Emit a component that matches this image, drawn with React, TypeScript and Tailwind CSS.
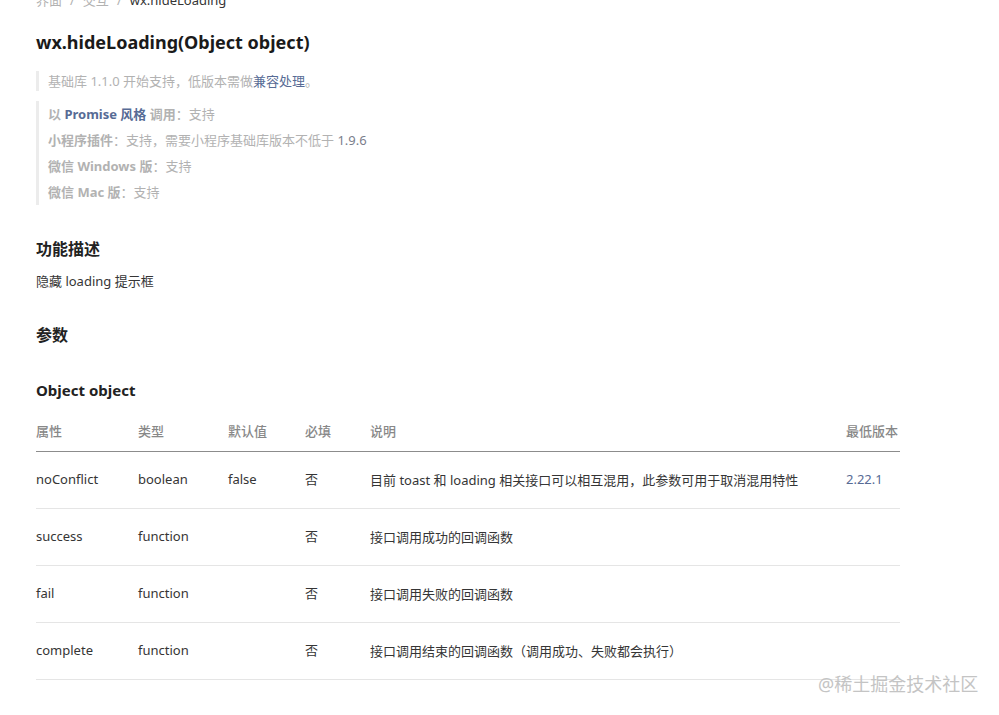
import React from 'react';

// Docs page: wx.hideLoading API reference

const font = "font-['Noto_Sans','Noto_Sans_CJK_SC',sans-serif]";

type Row = {
  name: string;
  type: string;
  def: string;
  required: string;
  desc: string;
  version: string;
};

const rows: Row[] = [
  {
    name: 'noConflict',
    type: 'boolean',
    def: 'false',
    required: '否',
    desc: '目前 toast 和 loading 相关接口可以相互混用，此参数可用于取消混用特性',
    version: '2.22.1',
  },
  { name: 'success', type: 'function', def: '', required: '否', desc: '接口调用成功的回调函数', version: '' },
  { name: 'fail', type: 'function', def: '', required: '否', desc: '接口调用失败的回调函数', version: '' },
  {
    name: 'complete',
    type: 'function',
    def: '',
    required: '否',
    desc: '接口调用结束的回调函数（调用成功、失败都会执行）',
    version: '',
  },
];

const cols = 'grid grid-cols-[102px_90px_77px_65px_476px_54px]';

export default function App() {
  return (
    <div className={`relative w-[999px] h-[715px] overflow-hidden bg-white ${font}`}>
      <div className="pl-[36px]">
        {/* Breadcrumb (scrolled partly out of view) */}
        <div className="-mt-[11px] h-[22px] flex items-center gap-[8px] text-[13px] leading-[22px] text-[#b2b2b2]">
          <span>界面</span>
          <span>/</span>
          <span>交互</span>
          <span>/</span>
          <span className="text-[#353535]">wx.hideLoading</span>
        </div>

        {/* Title */}
        <h1 className="mt-[17px] h-[28px] text-[18px] leading-[28px] font-bold text-[#1a1a1a]">
          wx.hideLoading(Object object)
        </h1>

        {/* Support note */}
        <div className="mt-[15px] border-l-[3px] border-[#ececec] pl-[9px] text-[13px] leading-[20px] text-[#b2b2b2]">
          基础库 1.1.0 开始支持，低版本需做<span className="text-[#576b95]">兼容处理</span>。
        </div>

        <div className="mt-[10px] border-l-[3px] border-[#ececec] pl-[9px] text-[13px] leading-[26px] text-[#b2b2b2]">
          <p>
            <b>以 </b>
            <b className="text-[#576b95]">Promise 风格</b>
            <b> 调用</b>：支持
          </p>
          <p>
            <b>小程序插件</b>：支持，需要小程序基础库版本不低于 <span className="text-[#7a7e8c]">1.9.6</span>
          </p>
          <p>
            <b>微信 Windows 版</b>：支持
          </p>
          <p>
            <b>微信 Mac 版</b>：支持
          </p>
        </div>

        {/* Description */}
        <h2 className="mt-[32px] h-[24px] text-[16px] leading-[24px] font-bold text-[#222]">功能描述</h2>
        <p className="mt-[9px] h-[22px] text-[13px] leading-[22px] text-[#353535]">隐藏 loading 提示框</p>

        {/* Params */}
        <h2 className="mt-[31px] h-[24px] text-[16px] leading-[24px] font-bold text-[#222]">参数</h2>
        <h3 className="mt-[32px] h-[22px] text-[15px] leading-[22px] font-bold text-[#222]">Object object</h3>

        <div className="mt-[11px] w-[864px] text-[13px]">
          <div className={`${cols} h-[40px] items-center border-b border-[#8c8c8c] font-medium text-[#888]`}>
            <div>属性</div>
            <div>类型</div>
            <div>默认值</div>
            <div>必填</div>
            <div>说明</div>
            <div>最低版本</div>
          </div>
          {rows.map((r) => (
            <div
              key={r.name}
              className={`${cols} h-[57px] items-center border-b border-[#e5e5e5] text-[#353535]`}
            >
              <div>{r.name}</div>
              <div>{r.type}</div>
              <div>{r.def}</div>
              <div>{r.required}</div>
              <div className="pt-[1px]">{r.desc}</div>
              <div className="text-[#576b95]">{r.version}</div>
            </div>
          ))}
        </div>
      </div>

      {/* Watermark */}
      <div className="absolute left-[818px] top-[672px] text-[18px] leading-[24px] text-[#c4c4c4] whitespace-nowrap">
        @稀土掘金技术社区
      </div>
    </div>
  );
}
